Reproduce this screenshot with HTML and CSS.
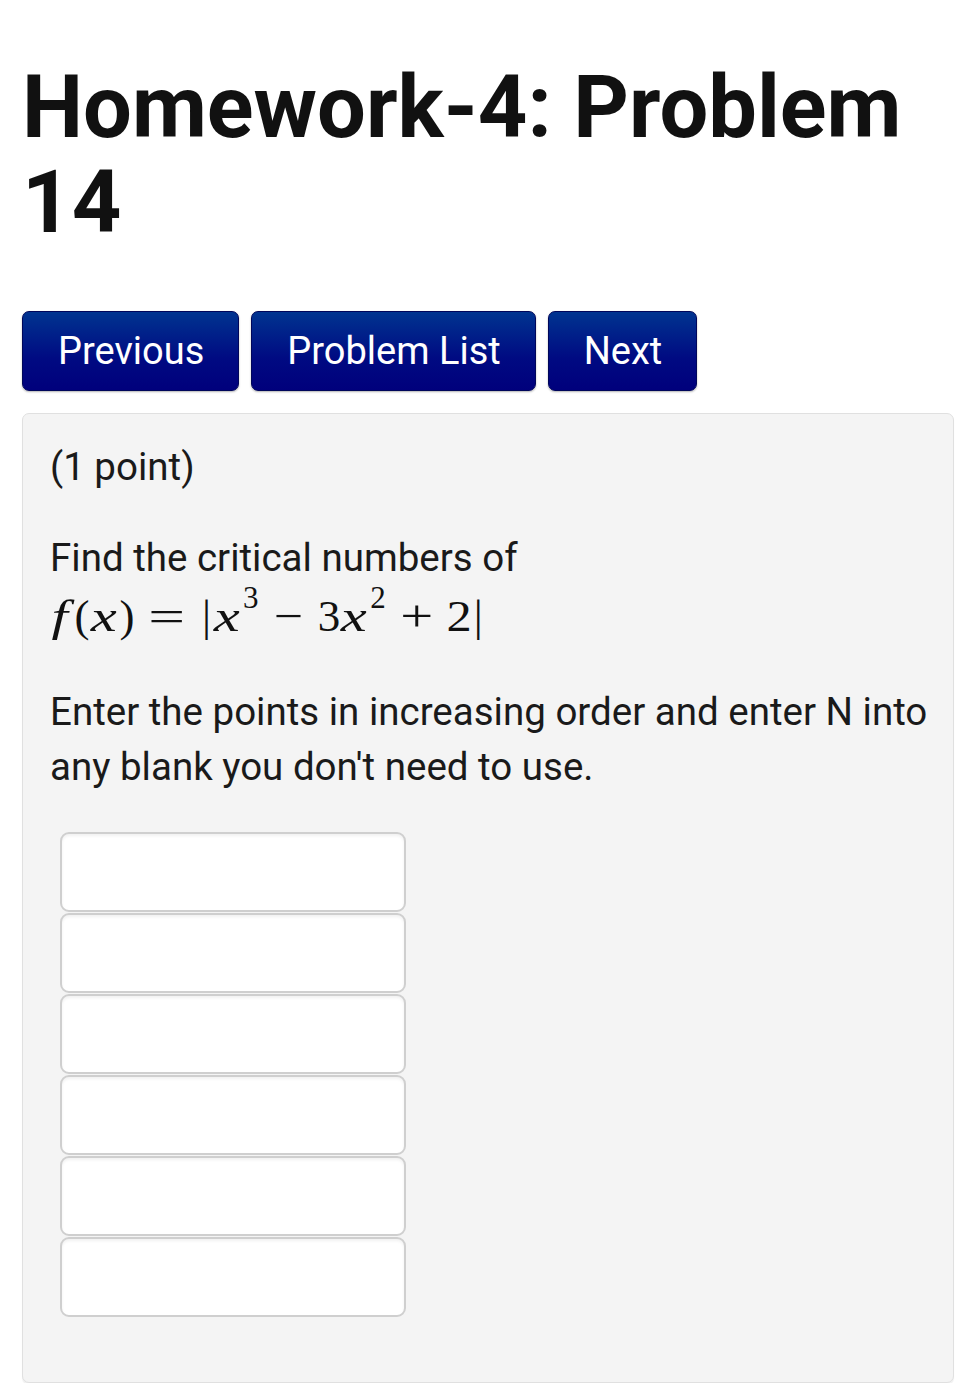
FILE: index.html
```html
<!DOCTYPE html>
<html lang="en">
<head>
  <meta charset="UTF-8">
  <meta name="viewport" content="width=device-width, initial-scale=1">
  <title>Homework-4: Problem 14</title>
  <link rel="stylesheet" href="styles.css">
</head>
<body>
  <div class="page">
    <h1>Homework-4: Problem 14</h1>

    <div class="nav">
      <a class="nav-btn" href="#">Previous</a>
      <a class="nav-btn" href="#">Problem List</a>
      <a class="nav-btn" href="#">Next</a>
    </div>

    <div class="problem">
      <p class="points">(1 point)</p>
      <p class="question">
        Find the critical numbers of<br>
        <span class="math"><span class="mi f">f</span>(<span class="mi">x</span>)<span class="rel">=</span><span class="bar">|</span><span class="mi">x</span><sup>3</sup><span class="bin minus">&minus;</span>3<span class="mi">x</span><sup>2</sup><span class="bin plus">+</span><span class="mn">2</span><span class="bar">|</span></span>
      </p>
      <p class="question">Enter the points in increasing order and enter N into any blank you don't need to use.</p>

      <div class="answers">
        <input class="answer" type="text">
        <input class="answer" type="text">
        <input class="answer" type="text">
        <input class="answer" type="text">
        <input class="answer" type="text">
        <input class="answer" type="text">
      </div>
    </div>
  </div>
</body>
</html>
```

FILE: styles.css
```css
body {
  margin: 0;
  font-family: Roboto, 'Liberation Sans', sans-serif;
  color: #1a1a1a;
  background: #fff;
}
.page {
  padding: 0 18px 0 22px;
}
h1 {
  margin: 60px 0 61px;
  font-size: 86.5px;
  line-height: 95px;
  font-weight: bold;
  color: #111;
}
.nav {
  display: flex;
  gap: 12px;
  margin-bottom: 22px;
}
.nav-btn {
  display: block;
  height: 78px;
  line-height: 78px;
  padding: 0 34px 0 35px;
  font-size: 38px;
  color: #fff;
  text-decoration: none;
  background: linear-gradient(to bottom, #003490, #000a82 60%, #00007c);
  border: 1px solid #00065a;
  border-radius: 7px;
  box-shadow: 0 1px 2px rgba(0,0,0,0.3);
}
.problem {
  background: #f4f4f4;
  border: 1px solid #e0e0e0;
  border-radius: 7px;
  box-shadow: 0 2px 1px rgba(0,0,0,0.06);
  padding: 20px 12px 65px 27px;
}
.points {
  margin: 5px 0 36px;
  font-size: 38.5px;
  line-height: 55px;
}
.question {
  margin: 0 0 36px;
  font-size: 38.5px;
  line-height: 55px;
}
.math {
  font-family: 'Liberation Serif', 'DejaVu Serif', serif;
  font-size: 45px;
  line-height: 63px;
  white-space: nowrap;
  color: #111;
}
.mi {
  font-style: italic;
  display: inline-block;
  padding: 0 6px 0 4px;
  transform: scaleX(1.3);
}
.mi.f {
  padding: 0 8px 0 4px;
}
.mn {
  display: inline-block;
  padding: 0 3px 0 1px;
  transform: scaleX(1.12);
}
.rel {
  display: inline-block;
  margin: 0 23px 0 19px;
  transform: scaleX(1.45);
}
.bin {
  display: inline-block;
}
.bin.minus {
  margin: 0 16px 0 18px;
  transform: scaleX(1.15);
}
.bin.plus {
  margin: 0 18px 0 18px;
  transform: scaleX(1.3);
}
.bar {
  padding: 0 2px 0 0;
}
.math sup {
  font-size: 31px;
  line-height: 0;
  vertical-align: 23px;
  margin-left: 0;
}
.answers {
  display: flex;
  flex-direction: column;
  gap: 1px;
  padding: 2px 0 0 10px;
}
.answer {
  width: 346px;
  height: 80px;
  box-sizing: border-box;
  border: 2px solid #cfcfcf;
  border-radius: 9px;
  background: #fff;
  box-shadow: inset 0 2px 3px rgba(0,0,0,0.06);
  margin: 0;
}
```
